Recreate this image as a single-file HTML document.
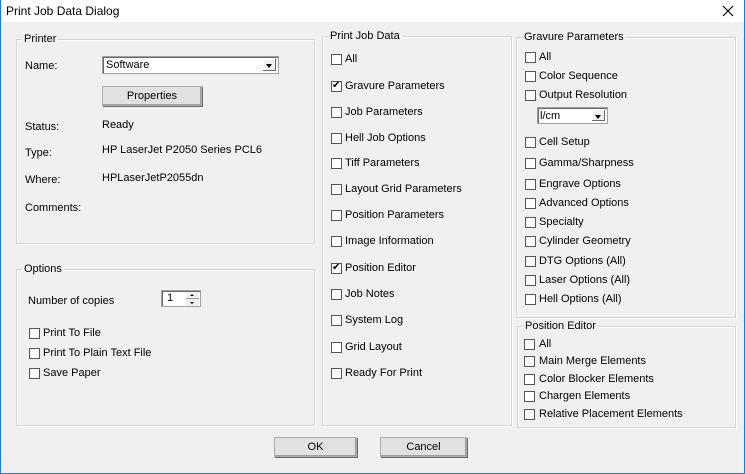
<!DOCTYPE html>
<html><head><style>
*{margin:0;padding:0;box-sizing:border-box}
body{width:745px;height:474px;position:relative;background:#f0f0f0;font-family:"Liberation Sans",sans-serif;font-size:11px;color:#000;overflow:hidden}
.win{position:absolute;left:0;top:0;width:745px;height:474px;border:1px solid #1a7fd4;border-top:none}
.title{position:absolute;left:0;top:0;width:745px;height:22px;background:#fff}
.t{position:absolute;white-space:nowrap;line-height:13px}
.g{position:absolute;border:1px solid #d5d5d5;box-shadow:inset 1px 1px 0 #fff,1px 1px 0 #fff}
.gl{position:absolute;top:-7px;left:5px;background:#f0f0f0;padding:0 2px;line-height:13px}
.cb{position:absolute;width:11px;height:11px;margin-top:1px;background:#fff;border:1px solid #555}
.ck{position:absolute;left:0px;top:-2px;font-size:10px;line-height:12px}
.btn{position:absolute;background:#e1e1e1;border:1px solid #adadad;box-shadow:inset -1px -1px 0 #a0a0a0, 1px 1px 0 #696969;text-align:center}
.combo{position:absolute;background:#fff;border:1px solid #a0a0a0;box-shadow:inset 1px 1px 0 #696969}
.arr{position:absolute;right:2px;top:2px;bottom:2px;width:13px;background:#f0f0f0;box-shadow:inset -1px -1px 0 #696969,inset 1px 1px 0 #fff}
.arr:after{content:"";position:absolute;left:3px;top:5px;border:3.5px solid transparent;border-top:4px solid #000;border-bottom:none}
</style></head><body>
<div class="title"></div>
<div class="win"></div>
<div class="t" style="left:6px;top:5px;font-size:12px">Print Job Data Dialog</div>
<svg style="position:absolute;left:722px;top:5px" width="12" height="12"><path d="M1 1L11 11M11 1L1 11" stroke="#000" stroke-width="1.2"/></svg>

<!-- Printer -->
<div class="g" style="left:16px;top:39px;width:299px;height:205px"><span class="gl">Printer</span></div>
<div class="t" style="left:25px;top:60px">Name:</div>
<div class="combo" style="left:102px;top:56px;width:177px;height:18px"><span class="t" style="left:3px;top:2px">Software</span><div class="arr"></div></div>
<div class="btn" style="left:102px;top:86px;width:100px;height:20px;line-height:18px">Properties</div>
<div class="t" style="left:25px;top:121px">Status:</div>
<div class="t" style="left:102px;top:119px">Ready</div>
<div class="t" style="left:25px;top:147px">Type:</div>
<div class="t" style="left:102px;top:144px">HP LaserJet P2050 Series PCL6</div>
<div class="t" style="left:25px;top:174px">Where:</div>
<div class="t" style="left:102px;top:172px">HPLaserJetP2055dn</div>
<div class="t" style="left:25px;top:202px">Comments:</div>

<!-- Options -->
<div class="g" style="left:16px;top:269px;width:299px;height:157px"><span class="gl">Options</span></div>
<div class="t" style="left:28px;top:295px">Number of copies</div>
<div class="combo" style="left:161px;top:290px;width:40px;height:17px"><span class="t" style="left:5px;top:1px">1</span>
<div style="position:absolute;right:1px;top:1px;width:13px;height:7px;background:#f0f0f0;border-bottom:1px solid #999"></div>
<div style="position:absolute;right:1px;top:8px;width:13px;height:7px;background:#f0f0f0"></div>
<div style="position:absolute;right:6px;top:3px;border:2px solid transparent;border-bottom:2px solid #000;border-top:none"></div>
<div style="position:absolute;right:6px;top:11px;border:2px solid transparent;border-top:2px solid #000;border-bottom:none"></div>
</div>
<div class="cb" style="left:29px;top:327px"></div><div class="t" style="left:43px;top:327px">Print To File</div>
<div class="cb" style="left:29px;top:347px"></div><div class="t" style="left:43px;top:347px">Print To Plain Text File</div>
<div class="cb" style="left:29px;top:367px"></div><div class="t" style="left:43px;top:367px">Save Paper</div>

<!-- Print Job Data -->
<div class="g" style="left:322px;top:36px;width:190px;height:390px"><span class="gl">Print Job Data</span></div>
<div class="cb" style="left:331px;top:53px"></div><div class="t" style="left:345px;top:53px">All</div>
<div class="cb" style="left:331px;top:80px"><span class="ck">✔</span></div><div class="t" style="left:345px;top:80px">Gravure Parameters</div>
<div class="cb" style="left:331px;top:106px"></div><div class="t" style="left:345px;top:106px">Job Parameters</div>
<div class="cb" style="left:331px;top:132px"></div><div class="t" style="left:345px;top:132px">Hell Job Options</div>
<div class="cb" style="left:331px;top:157px"></div><div class="t" style="left:345px;top:157px">Tiff Parameters</div>
<div class="cb" style="left:331px;top:183px"></div><div class="t" style="left:345px;top:183px">Layout Grid Parameters</div>
<div class="cb" style="left:331px;top:209px"></div><div class="t" style="left:345px;top:209px">Position Parameters</div>
<div class="cb" style="left:331px;top:235px"></div><div class="t" style="left:345px;top:235px">Image Information</div>
<div class="cb" style="left:331px;top:262px"><span class="ck">✔</span></div><div class="t" style="left:345px;top:262px">Position Editor</div>
<div class="cb" style="left:331px;top:288px"></div><div class="t" style="left:345px;top:288px">Job Notes</div>
<div class="cb" style="left:331px;top:314px"></div><div class="t" style="left:345px;top:314px">System Log</div>
<div class="cb" style="left:331px;top:341px"></div><div class="t" style="left:345px;top:341px">Grid Layout</div>
<div class="cb" style="left:331px;top:367px"></div><div class="t" style="left:345px;top:367px">Ready For Print</div>

<!-- Gravure -->
<div class="g" style="left:516px;top:37px;width:220px;height:281px"><span class="gl">Gravure Parameters</span></div>
<div class="cb" style="left:525px;top:51px"></div><div class="t" style="left:539px;top:51px">All</div>
<div class="cb" style="left:525px;top:70px"></div><div class="t" style="left:539px;top:70px">Color Sequence</div>
<div class="cb" style="left:525px;top:89px"></div><div class="t" style="left:539px;top:89px">Output Resolution</div>
<div class="combo" style="left:537px;top:107px;width:71px;height:17px"><span class="t" style="left:2px;top:2px">l/cm</span><div class="arr"></div></div>
<div class="cb" style="left:525px;top:136px"></div><div class="t" style="left:539px;top:136px">Cell Setup</div>
<div class="cb" style="left:525px;top:157px"></div><div class="t" style="left:539px;top:157px">Gamma/Sharpness</div>
<div class="cb" style="left:525px;top:178px"></div><div class="t" style="left:539px;top:178px">Engrave Options</div>
<div class="cb" style="left:525px;top:197px"></div><div class="t" style="left:539px;top:197px">Advanced Options</div>
<div class="cb" style="left:525px;top:216px"></div><div class="t" style="left:539px;top:216px">Specialty</div>
<div class="cb" style="left:525px;top:235px"></div><div class="t" style="left:539px;top:235px">Cylinder Geometry</div>
<div class="cb" style="left:525px;top:255px"></div><div class="t" style="left:539px;top:255px">DTG Options (All)</div>
<div class="cb" style="left:525px;top:274px"></div><div class="t" style="left:539px;top:274px">Laser Options (All)</div>
<div class="cb" style="left:525px;top:293px"></div><div class="t" style="left:539px;top:293px">Hell Options (All)</div>

<!-- Position Editor -->
<div class="g" style="left:517px;top:326px;width:219px;height:102px"><span class="gl">Position Editor</span></div>
<div class="cb" style="left:524px;top:338px"></div><div class="t" style="left:539px;top:338px">All</div>
<div class="cb" style="left:524px;top:355px"></div><div class="t" style="left:539px;top:355px">Main Merge Elements</div>
<div class="cb" style="left:524px;top:373px"></div><div class="t" style="left:539px;top:373px">Color Blocker Elements</div>
<div class="cb" style="left:524px;top:390px"></div><div class="t" style="left:539px;top:390px">Chargen Elements</div>
<div class="cb" style="left:524px;top:408px"></div><div class="t" style="left:539px;top:408px">Relative Placement Elements</div>

<div class="btn" style="left:274px;top:437px;width:83px;height:20px;line-height:18px">OK</div>
<div class="btn" style="left:380px;top:437px;width:87px;height:20px;line-height:18px">Cancel</div>
</body></html>
